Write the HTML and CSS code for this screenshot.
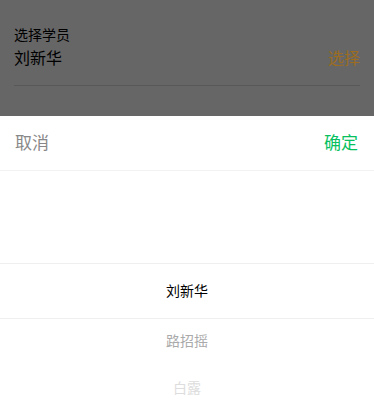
FILE: index.html
```html
<!DOCTYPE html>
<html lang="zh-CN">
<head>
    <meta charset="UTF-8">
    <meta name="viewport" content="width=device-width, initial-scale=1.0">
    <title>选择学员</title>
    <link rel="stylesheet" href="styles.css">
</head>
<body>
    <div class="page">
        <div class="form-item">
            <div class="label">选择学员</div>
            <div class="row">
                <span class="name">刘新华</span>
                <span class="pick">选择</span>
            </div>
        </div>
    </div>

    <div class="sheet">
        <div class="sheet-head">
            <span class="cancel">取消</span>
            <span class="confirm">确定</span>
        </div>
        <div class="picker">
            <div class="picker-space"></div>
            <div class="picker-item current">刘新华</div>
            <div class="picker-item near">路招摇</div>
            <div class="picker-item far">白露</div>
        </div>
    </div>
</body>
</html>
```

FILE: styles.css
```css
html, body {
    margin: 0;
    padding: 0;
    height: 100%;
}
body {
    background: #666;
    font-family: "Noto Sans CJK SC", "Noto Sans", sans-serif;
    overflow: hidden;
}
.page {
    padding: 0 14px;
}
.form-item {
    padding-top: 24px;
    padding-bottom: 15px;
    border-bottom: 1px solid #585858;
}
.label {
    font-size: 14px;
    line-height: 20px;
    color: #000;
}
.row {
    display: flex;
    justify-content: space-between;
    align-items: center;
    line-height: 26px;
}
.name {
    font-size: 16px;
    color: #000;
}
.pick {
    font-size: 16px;
    color: #9c6c20;
}
.sheet {
    position: fixed;
    left: 0;
    right: 0;
    bottom: 0;
    height: 295px;
    background: #fff;
}
.sheet-head {
    display: flex;
    justify-content: space-between;
    align-items: center;
    height: 51px;
    padding: 0 16px 3px 15px;
    border-bottom: 1px solid #f2f2f2;
    font-size: 17px;
}
.cancel {
    color: #888;
}
.confirm {
    color: #07c160;
}
.picker {
    text-align: center;
    font-size: 14px;
}
.picker-space {
    height: 92px;
}
.picker-item {
    height: 46px;
    line-height: 46px;
}
.current {
    height: 54px;
    line-height: 52px;
    color: #000;
    border-top: 1px solid #efefef;
    border-bottom: 1px solid #efefef;
}
.near {
    height: 44px;
    line-height: 42px;
    color: #aaa;
}
.far {
    height: 48px;
    line-height: 48px;
    color: #ddd;
}
```
